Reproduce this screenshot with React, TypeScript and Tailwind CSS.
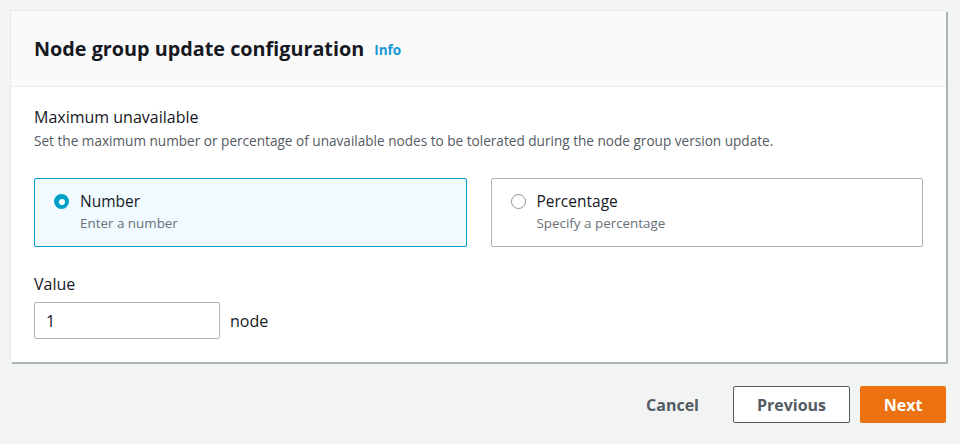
import React, { useState } from 'react'

const font = { fontFamily: '"Open Sans", "Noto Sans", Arial, sans-serif' }

interface TileProps {
  label: string
  hint: string
  selected: boolean
  onSelect: () => void
}

const RadioTile: React.FC<TileProps> = ({ label, hint, selected, onSelect }) => (
  <div
    onClick={onSelect}
    className={`flex h-[69px] flex-1 cursor-pointer items-start gap-[11px] rounded-[2px] border px-[19px] pt-[11px] ${
      selected ? 'border-[#00a1c9] bg-[#f1faff]' : 'border-[#aab7b8] bg-white'
    }`}
  >
    <span
      className={`mt-[4px] flex h-[15px] w-[15px] shrink-0 items-center justify-center rounded-full ${
        selected ? 'bg-[#00a1c9]' : 'border border-[#879596] bg-white'
      }`}
    >
      {selected && <span className="h-[6px] w-[6px] rounded-full bg-white" />}
    </span>
    <div className="flex flex-col">
      <span className="text-[15.5px] leading-[22px] text-[#16191f]">{label}</span>
      <span className="text-[13.4px] leading-[22px] text-[#687078]">{hint}</span>
    </div>
  </div>
)

export default function App() {
  const [mode, setMode] = useState<'number' | 'percentage'>('number')

  return (
    <div className="min-h-[444px] w-[960px] bg-[#f2f3f3] pl-[10px] pr-[14px] pt-[10px]" style={font}>
      <div className="border-l border-t border-dotted border-[#d5dbdb] bg-white shadow-[2px_2px_0_0_#aab7b8]">
        <div className="flex h-[76px] items-center gap-[10px] border-b border-[#eaeded] bg-[#fafafa] px-[23px]">
          <h2 className="text-[19.8px] font-bold leading-[26px] text-[#16191f]">Node group update configuration</h2>
          <span className="mt-[3px] text-[13.5px] font-bold text-[#1a97d4]">Info</span>
        </div>
        <div className="px-[23px] pb-[23px] pt-[19px]">
          <div className="text-[16px] leading-[22px] text-[#16191f]">Maximum unavailable</div>
          <div className="mt-[2px] text-[13.6px] leading-[22px] text-[#545b64]">
            Set the maximum number or percentage of unavailable nodes to be tolerated during the node group version update.
          </div>
          <div className="mt-[26px] flex gap-[24px]">
            <RadioTile
              label="Number"
              hint="Enter a number"
              selected={mode === 'number'}
              onSelect={() => setMode('number')}
            />
            <RadioTile
              label="Percentage"
              hint="Specify a percentage"
              selected={mode === 'percentage'}
              onSelect={() => setMode('percentage')}
            />
          </div>
          <div className="mt-[26px] text-[16px] leading-[22px] text-[#16191f]">Value</div>
          <div className="mt-[7px] flex items-center gap-[10px]">
            <input
              defaultValue="1"
              className="h-[37px] w-[186px] rounded-[2px] border border-[#aab7b8] bg-white px-[11px] text-[16px] text-[#16191f] outline-none"
              style={font}
            />
            <span className="text-[16px] text-[#16191f]">node</span>
          </div>
        </div>
      </div>
      <div className="mt-[24px] flex items-center justify-end">
        <button className="mr-[34px] text-[16px] font-bold text-[#545b64]">Cancel</button>
        <button className="mr-[10px] h-[37px] w-[117px] rounded-[2px] border border-[#545b64] bg-white text-[16px] font-bold text-[#545b64]">
          Previous
        </button>
        <button className="h-[37px] w-[86px] rounded-[2px] bg-[#ec7211] text-[16px] font-bold text-white">
          Next
        </button>
      </div>
    </div>
  )
}
